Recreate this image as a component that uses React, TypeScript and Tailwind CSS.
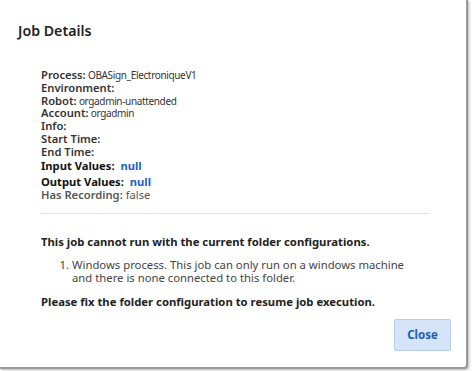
export default function App() {
  const rows: { label: string; value?: string }[] = [
    { label: "Process:", value: "OBASign_ElectroniqueV1" },
    { label: "Environment:" },
    { label: "Robot:", value: "orgadmin-unattended" },
    { label: "Account:", value: "orgadmin" },
    { label: "Info:" },
    { label: "Start Time:" },
    { label: "End Time:" },
  ];

  return (
    <div
      className="relative h-[371px] w-[474px] overflow-hidden bg-white"
      style={{ fontFamily: '"Noto Sans", "Open Sans", sans-serif' }}
    >
      <div className="relative flex h-[369px] w-[468px] flex-col rounded-br-[4px] border-r-[2px] border-b-[2px] border-[#9a9a9a] bg-white shadow-[1px_1px_3px_rgba(0,0,0,0.3)]">
        <h2 className="px-[18px] pt-[21px] text-[14.2px] font-semibold leading-[20px] text-[#222]">
          Job Details
        </h2>

        <div className="pl-[41px] pr-[36px] pt-[28px]">
          <div className="text-[11.2px] leading-[12.75px] text-[#333]">
            {rows.map((r) => (
              <div key={r.label} className="h-[12.75px] whitespace-nowrap">
                <span className="font-semibold">{r.label}</span>
                {r.value && (
                  <span className="text-[10px] tracking-[-0.35px]"> {r.value}</span>
                )}
              </div>
            ))}
            <div className="mt-[1.5px] h-[12.75px] whitespace-nowrap font-bold text-[#111]">
              Input Values:{" "}
              <span className="ml-[3px] text-[#1a5fc8]">null</span>
            </div>
            <div className="mt-[3px] h-[12.75px] whitespace-nowrap font-bold text-[#111]">
              Output Values:{" "}
              <span className="ml-[3px] text-[#1a5fc8]">null</span>
            </div>
            <div className="mt-[0.75px] h-[12.75px] whitespace-nowrap text-[#555]">
              <span className="font-semibold">Has Recording:</span> false
            </div>
          </div>

          <div className="mt-[11.5px] w-[389px] border-t border-[#e4e4e4]" />

          <div className="pt-[21px] text-[11.3px] text-[#222]">
            <p className="font-bold leading-[14px]">
              This job cannot run with the current folder configurations.
            </p>
            <ol className="mt-[9px] w-[370px] list-decimal pl-[31px] leading-[13px] text-[#444]">
              <li>
                Windows process. This job can only run on a windows machine and
                there is none connected to this folder.
              </li>
            </ol>
            <p className="mt-[10.5px] font-bold leading-[14px]">
              Please fix the folder configuration to resume job execution.
            </p>
          </div>
        </div>

        <div className="flex justify-end pr-[15px] pt-[10px]">
          <button className="h-[32px] w-[57px] rounded-[2px] border border-[#b7cde8] bg-[#d5e4f8] text-[11.5px] font-bold text-[#1a5fb4]">
            Close
          </button>
        </div>
      </div>
    </div>
  );
}
